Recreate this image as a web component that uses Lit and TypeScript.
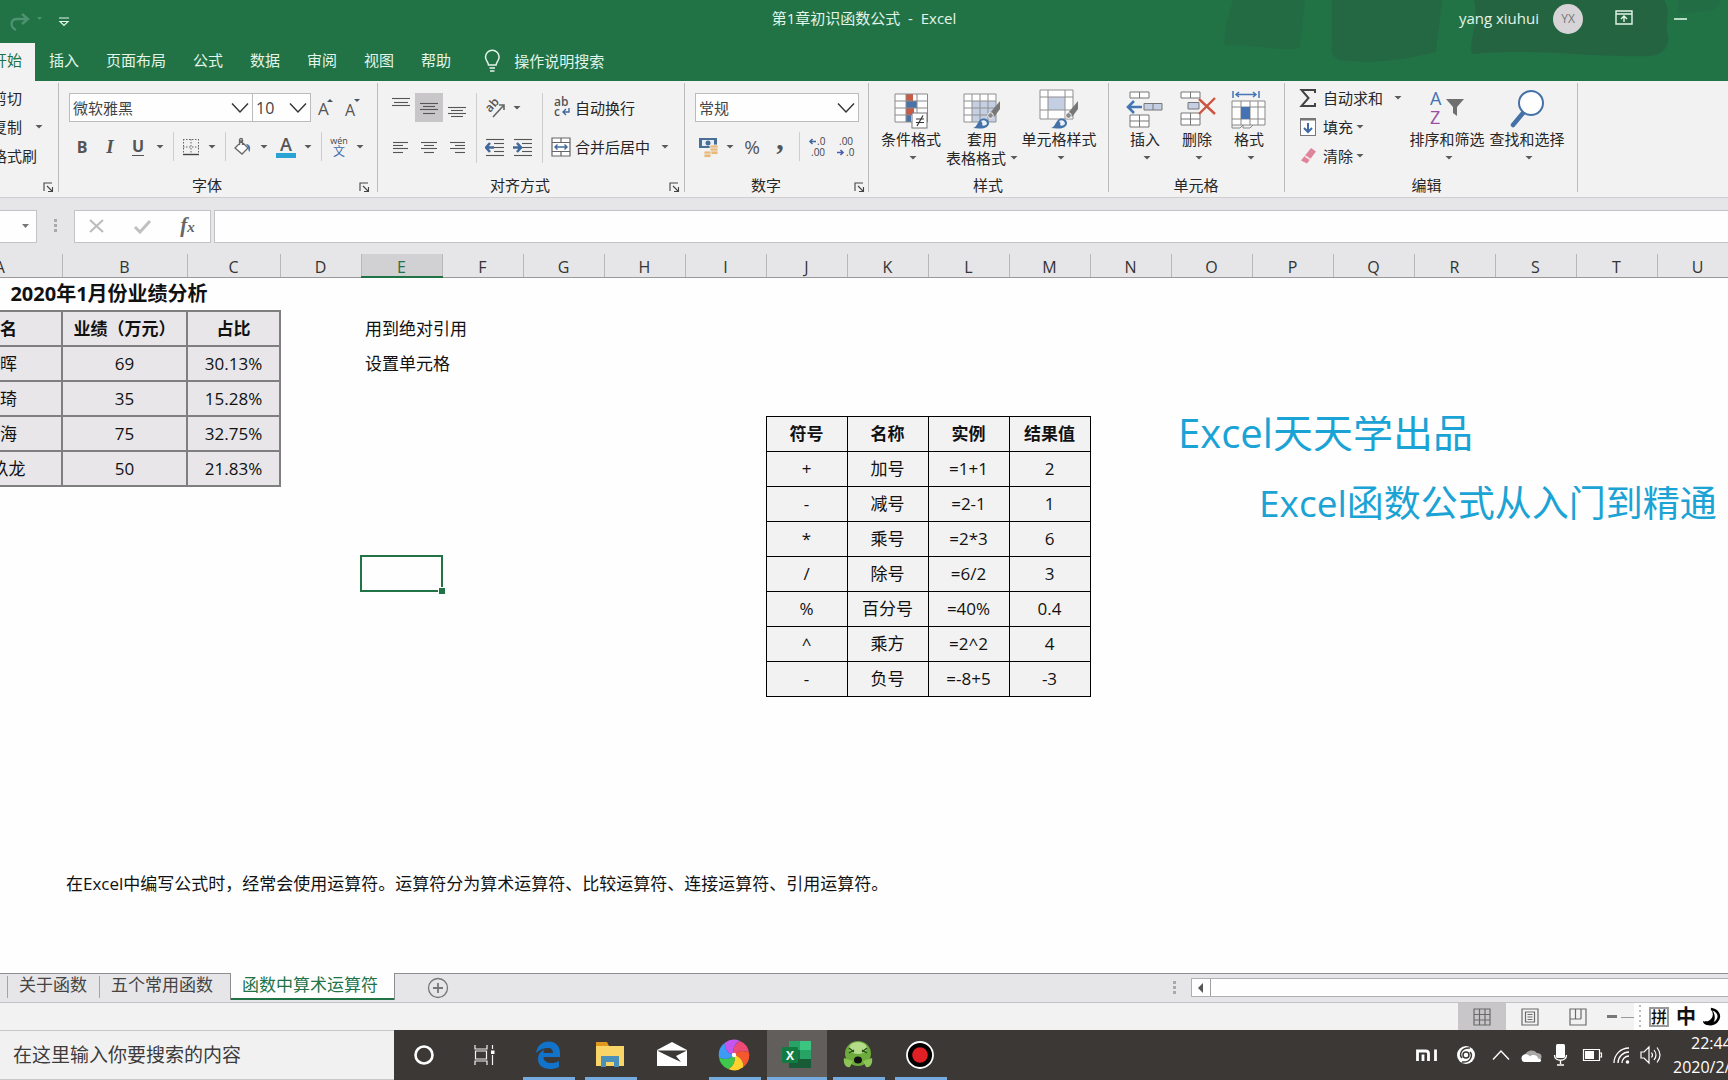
import { LitElement, html, svg, css, nothing } from "lit";
import { customElement, state } from "lit/decorators.js";
import { classMap } from "lit/directives/class-map.js";

type Cell = { t: string; cls?: string; span?: number };

const icon = (w: number, h: number, body: unknown) =>
  html`<svg width=${w} height=${h} viewBox="0 0 ${w} ${h}" aria-hidden="true">${body}</svg>`;

const caretIcon = () => icon(16, 16, svg`<path d="M4.500 6h7L8 9.500z" fill="#5a5a5a"/>`);
const caret = (label: string) => html`<button class="caret" aria-label=${label}>${caretIcon()}</button>`;
const launcher = (label: string) => html`<button class="launcher" aria-label=${label}>
  ${icon(11, 11, svg`<path d="M1 9V1h8M4 4l5 5M9.500 5v4.500H5" fill="none" stroke="#444" stroke-width="1.1"/>`)}
</button>`;

const lines = (rows: [number, number, number][]) =>
  svg`${rows.map(([x, w, y]) => svg`<path d="M${x} ${y}.5h${w}" stroke="#555" stroke-width="1.1"/>`)}`;

const brush = (x: number, y: number) => svg`<g transform="translate(${x} ${y})">
  <path d="M27 0 17 12l4 4 6-8z" fill="#777"/>
  <circle cx="17.500" cy="14.500" r="2.800" fill="#8a8a8a" stroke="#f3f2f3"/>
  <path d="M0 27c4-1 4-5 7-8 3-3 9-1 9 3 0 4-5 6-10 5.500z" fill="#4472a8"/>
  <path d="M8 20c3-2 6 0 6 3-2 2-4 2-5 1 1-1 0-3-1-4z" fill="#eaf0f8"/>
</g>`;

const COLS = [124, 125, 93, ...Array(18).fill(81)];
const LETTERS = "ABCDEFGHIJKLMNOPQRSTU".split("");

const SALES: string[][] = [
  ["姓名", "业绩（万元）", "占比"],
  ["\u3000晖", "69", "30.13%"],
  ["\u3000琦", "35", "15.28%"],
  ["\u3000海", "75", "32.75%"],
  ["\u3000玖龙", "50", "21.83%"],
];

const OPS: string[][] = [
  ["符号", "名称", "实例", "结果值"],
  ["+", "加号", "=1+1", "2"],
  ["-", "减号", "=2-1", "1"],
  ["*", "乘号", "=2*3", "6"],
  ["/", "除号", "=6/2", "3"],
  ["%", "百分号", "=40%", "0.4"],
  ["^", "乘方", "=2^2", "4"],
  ["-", "负号", "=-8+5", "-3"],
];

const ROW_COUNT = 20;

function buildRows(): Cell[][] {
  const rows: Cell[][] = Array.from({ length: ROW_COUNT }, () => COLS.map(() => ({ t: "" })));
  SALES.forEach((r, i) =>
    r.forEach((t, c) => (rows[1 + i][c] = { t, cls: i === 0 ? "sales bold" : "sales" })));
  OPS.forEach((r, i) =>
    r.forEach((t, c) => (rows[4 + i][9 + c] = { t, cls: i === 0 ? "ops bold" : "ops" })));
  rows[1][4] = { t: "用到绝对引用" };
  rows[2][4] = { t: "设置单元格" };
  rows[4][14] = { t: "Excel天天学出品", cls: "brand huge" };
  rows[6][15] = { t: "Excel函数公式从入门到精通", cls: "brand" };
  rows[8][4] = { t: "", cls: "selected" };
  rows[17][1] = { t: "在Excel中编写公式时，经常会使用运算符。运算符分为算术运算符、比较运算符、连接运算符、引用运算符。" };
  rows[0].splice(0, 3, { t: "2020年1月份业绩分析", cls: "heading", span: 3 });
  return rows;
}

@customElement("app-root")
export class AppRoot extends LitElement {
  @state() private sheet = 2;
  private rows = buildRows();
  private sheets = ["关于函数", "五个常用函数", "函数中算术运算符"];

  static styles = css`
    :host {
      display: flex; flex-direction: column; height: 100vh; overflow: hidden;
      font: 15px/20px "Open Sans", "Noto Sans CJK SC", sans-serif; color: #262626; background: #fefefe;
    }
    * { box-sizing: border-box; }
    button, input, select { font: inherit; color: inherit; border: 0; padding: 0; margin: 0; background: none; border-radius: 0; }
    button { display: inline-flex; align-items: center; justify-content: center; white-space: nowrap; flex: none; }
    svg { display: block; flex: none; }
    a { color: inherit; text-decoration: none; }

    .top { background: #217346; color: #e3f5ea; position: relative; flex: none; }
    .smudge { position: absolute; top: 0; right: 0; }
    .titlebar { position: relative; display: grid; grid-template-columns: 1fr auto 1fr; height: 43px; padding-bottom: 8px; align-items: center; }
    .qat { display: flex; align-items: center; padding: 8px 0 0 8px; }
    .title { white-space: pre; }
    .account { display: flex; justify-content: flex-end; align-items: center; padding-right: 34px; }
    .avatar { width: 30px; height: 30px; border-radius: 50%; background: #d6d4d6; color: #777; font-size: 12px; display: grid; place-items: center; margin: 2px 32px 0 14px; }
    .account button + button { margin-left: 35px; }
    .tabs { position: relative; display: flex; gap: 27px; height: 38px; margin-left: -22px; align-items: stretch; white-space: nowrap; }
    .tabs a { display: flex; align-items: center; padding-bottom: 4px; }
    .tabs .home { background: #f3f2f3; color: #217346; padding: 0 13px 4px 14px; margin-right: -13px; }
    .tabs .tell { gap: 8px; padding-bottom: 2px; }

    .ribbon { display: flex; flex: none; height: 117px; background: #f3f2f3; border-bottom: 1px solid #cfcdd0; }
    .group { position: relative; display: grid; grid-template-rows: 92px 20px; padding: 0 9px; margin: 2px 0 3px; height: 109px; border-right: 1px solid #bdbbbe; flex: none; }
    .clip { width: 59px; padding: 0; }
    .font { width: 319px; } .align { width: 307px; } .number { width: 184px; padding-right: 8px; }
    .styles { width: 240px; padding-left: 10px; } .cells { width: 176px; padding-left: 10px; } .edit { width: 293px; padding: 0 6px 0 13px; }
    .group footer { display: flex; justify-content: center; align-items: center; position: relative; padding-right: 22px; line-height: 20px; }
    .group footer.plain { padding-right: 2px; }
    .edit footer.plain { padding-right: 16px; }
    .launcher { position: absolute; right: -5px; bottom: 2px; }
    .font .launcher { right: -2px; }
    .clip .launcher { right: 4px; }
    .two { display: grid; grid-template-rows: 29px 29px; row-gap: 10px; padding-top: 10px; align-content: start; }
    .row { display: flex; align-items: center; }
    .cols { display: flex; align-items: stretch; }
    .cols > .sep { height: 70px; margin-top: 10px; }
    .b28 { width: 28px; height: 29px; }
    .b26 { width: 26px; height: 29px; }
    .on { background: #c8c6c9; }
    .caret { width: 16px; height: 29px; }
    .sep { width: 10px; height: 29px; background: linear-gradient(#cfcdd0, #cfcdd0) center / 1px 100% no-repeat; flex: none; }
    .letter { font-size: 16px; color: #555; }
    .bold { font-weight: 700; }
    .italic { font-family: "Liberation Serif", serif; font-style: italic; font-weight: 700; font-size: 19px; }
    .under { border-bottom: 1px solid #555; line-height: 17px; font-weight: 700; }
    .pct { font-size: 19px; color: #555; }
    .comma { font: 700 30px/20px "Liberation Serif", serif; color: #555; padding-bottom: 16px; }
    .combo { display: grid; height: 29px; }
    .combo select, .combo svg { grid-area: 1 / 1; }
    .combo select { appearance: none; width: 100%; height: 29px; border: 1px solid #bcbabd; background: #fefefe; padding: 0 3px; color: #444; }
    .combo svg { justify-self: end; align-self: center; margin-right: 4px; pointer-events: none; }
    .face { width: 184px; margin-left: 1px; } .size { width: 59px; margin-left: -1px; } .size select { font-size: 16px; }
    .grow { width: 27px; height: 29px; }
    .fmt { width: 164px; margin-left: 1px; }
    .clip .three { display: grid; grid-auto-rows: 29px; justify-items: start; margin-left: -8px; }
    .clip .three .caret { margin-left: 9px; }
    .merge .caret { margin-left: 7px; }
    .big { display: grid; grid-template-rows: 44px 20px 18px; justify-items: center; align-items: center; padding-top: 2px; align-content: start; }
    .big svg { align-self: end; }
    .big .caretrow { display: flex; align-items: center; line-height: 18px; padding-left: 4px; }
    .big .caretrow svg { align-self: center; }
    .big .name { line-height: 20px; align-self: end; }
    .s1 { width: 64px; } .s2 { width: 76px; padding-left: 2px; } .s3 { width: 80px; } .s4 { width: 52px; } .s5 { width: 80px; }
    .edit .three { display: grid; grid-template-rows: 29px 29px 29px; width: 109px; justify-items: start; }
    .edit .three button { gap: 5px; }
    .edit .three .caret { margin-left: 7px; }
    .edit .three button svg + svg { margin-left: -6px; }

    .formula { display: flex; flex: none; align-items: center; height: 56px; background: #e6e5e7; }
    .formula > * { height: 33px; }
    .namebox { display: flex; align-items: center; width: 37px; background: #fefefe; border: 1px solid #c4c2c5; border-left: 0; }
    .namebox input { width: 17px; outline: 0; }
    .grip { width: 37px; display: grid; place-items: center; }
    .fx { display: flex; width: 137px; background: #fefefe; border: 1px solid #c4c2c5; }
    .fx button { width: 45px; }
    .fx i { font: italic 700 21px/24px "Liberation Serif", serif; color: #666; }
    .fx i small { font-size: 15px; }
    .bar { flex: 1; min-width: 0; margin-left: 3px; background: #fefefe; border: 1px solid #c4c2c5; border-right: 0; outline: 0; padding: 0 6px; }

    .sheet { flex: 1 1 0; min-height: 0; overflow: hidden; background: #fefefe; }
    .grid { table-layout: fixed; border-collapse: collapse; width: 1800px; margin-left: -63px; font-size: 17px; line-height: 24px; color: #111; }
    .grid th { height: 23px; padding: 3px 0 0; line-height: 18px; font-weight: 400; font-size: 16px; color: #333; background: #e6e5e7; border-right: 1px solid #b9b7ba; border-bottom: 1px solid #9a989b; }
    .grid th.cur { background: #d1d0d2; color: #217346; border-bottom: 2px solid #217346; }
    .grid tr { height: 35px; }
    .grid tr.short { height: 34px; }
    .grid thead tr { height: 23px; }
    .grid td { padding: 0 0 0 4px; white-space: nowrap; }
    .grid td.heading { text-align: center; font-size: 20px; font-weight: 700; padding: 0; }
    .grid td.sales { background: #e8e6e9; border: 2px solid #7f7f7f; text-align: center; padding: 0; }
    .grid td.ops { background: #f3f2f3; border: 1px solid #000; text-align: center; padding: 0; }
    .grid td.bold { font-weight: 700; }
    .grid td.brand { font-size: 37px; color: #1aa3d4; padding-left: 7px; }
    .grid td.huge { font-size: 40px; }
    .grid td.brand div { height: 35px; line-height: 34px; overflow-x: visible; overflow-y: clip; }
    .grid td.selected { position: relative; }
    .grid td.selected::before { content: ""; position: absolute; inset: -1px; border: 2px solid #217346; }
    .grid td.selected::after { content: ""; position: absolute; right: -3px; bottom: -3px; width: 6px; height: 6px; background: #217346; border: 1px solid #fefefe; border-right: 0; border-bottom: 0; }

    .sheets { display: flex; flex: none; height: 29px; background: #e6e5e7; border-top: 1px solid #8f8d90; font-size: 17px; color: #444; }
    .sheets nav { display: flex; padding-left: 7px; }
    .sheets nav button { height: 22px; margin-top: 2px; padding: 0 12px 4px 11px; border-left: 1px solid #a5a3a6; line-height: 18px; }
    .sheets nav button:nth-child(2) { padding-right: 17px; }
    .sheets nav .act { margin-top: -1px; height: 27px; padding: 0 16px 4px 11px; background: #fefefe; color: #217346; border: solid #8f8d90; border-width: 0 1px; box-shadow: inset 0 -2px #217346; }
    .add { margin-left: 32px; height: 28px; }
    .sheets .grip { margin-left: auto; width: 33px; height: 28px; }
    .scroll { display: flex; width: 537px; height: 19px; margin-top: 4px; background: #fefefe; border: 1px solid #b0aeb1; border-right: 0; }
    .scroll button { width: 19px; border-right: 1px solid #a09ea1; }

    .status { display: flex; flex: none; justify-content: flex-end; height: 28px; background: #f3f2f3; border-top: 1px solid #c4c2c5; }
    .status .view { width: 48px; }
    .zoomer { display: flex; align-items: center; width: 32px; overflow: hidden; }
    .ime { display: flex; align-items: center; width: 94px; height: 28px; background: #fefefe; color: #111; font-weight: 700; }
    .ime .pin { width: 20px; height: 20px; border: 2px solid #999; font-size: 16px; line-height: 16px; display: grid; place-items: center; margin: 0 7px 0 3px; font-weight: 500; }
    .ime .zh { font-size: 20px; margin-right: 6px; }

    .taskbar { display: flex; flex: none; height: 50px; background: #3c3836; color: #fff; }
    .search { width: 394px; background: #f2f1f2; border: solid #c9c7ca; border-width: 1px 0; display: flex; }
    .search input { flex: 1; padding: 0 13px; font-size: 19px; outline: 0; color: #333; }
    .search input::placeholder { color: #3c3c3c; opacity: 1; }
    .task { width: 62px; border: solid transparent; border-width: 0 5px; padding-right: 2px; }
    .task.run { background: linear-gradient(#76abdf, #76abdf) bottom / 100% 3px no-repeat padding-box; }
    .task.front { border-width: 0 1px; background: linear-gradient(#76abdf, #76abdf) bottom / 100% 3px no-repeat padding-box, #625e5c; background-clip: padding-box; }
    .tray { display: flex; margin-left: auto; align-items: center; }
    .clock { width: 55px; overflow: hidden; line-height: 24px; font-size: 16px; white-space: nowrap; }
    .clock .time { padding-left: 18px; display: block; }
  `;

  private chevron = () => icon(18, 12, svg`<path d="M1 1.500 9 10l8-8.500" fill="none" stroke="#333" stroke-width="1.400"/>`);

  private renderTop() {
    const tabs = ["插入", "页面布局", "公式", "数据", "审阅", "视图", "帮助"];
    return html`<header class="top">
      <svg class="smudge" width="520" height="81" viewBox="0 0 520 81" aria-hidden="true">
        <g fill="#275f40" opacity=".75">
          <path d="M25 0h72l-2 20-4 28c-30 4-48-6-74-2-2-18 4-30 8-46z" opacity=".5"/>
          <path d="M124 0h110l-6 52c-34 8-60 12-96 8-8-4-10-8-8-14z" opacity=".7"/>
          <path d="M266 0h190c8 12 0 24 4 36 2 10-6 20-18 20-60 2-110-8-178-2-4-14 8-30 2-54z"/>
          <path d="M470 0h44l-8 10-36 4z" opacity=".4"/>
        </g>
      </svg>
      <div class="titlebar">
        <div class="qat">
          <button aria-label="恢复">${icon(24, 20, svg`<path d="M8 18C2 15 2 7 9 7h9M14 2l6 5-6 5" fill="none" stroke="#4e9270" stroke-width="2.400"/>`)}</button>
          <button aria-label="恢复选项">${icon(16, 20, svg`<path d="M5 5h5L7.500 8z" fill="#4e9270"/>`)}</button>
          <button aria-label="自定义快速访问工具栏">${icon(30, 20, svg`<path d="M11 6h10M12 9.500h8L16 13.500z" fill="none" stroke="#e3f5ea" stroke-width="1.200"/>`)}</button>
        </div>
        <div class="title">第1章初识函数公式  -  Excel</div>
        <div class="account">
          <span>yang xiuhui</span><span class="avatar">YX</span>
          <button aria-label="功能区显示选项">${icon(18, 15, svg`<path d="M1 1h16v13H1zM1 4h16M9 12V6.500M6 9l3-3 3 3" fill="none" stroke="#e3f5ea" stroke-width="1.400"/>`)}</button>
          <button aria-label="最小化">${icon(26, 15, svg`<path d="M6 9h13" stroke="#e3f5ea" stroke-width="1.600"/>`)}</button>
        </div>
      </div>
      <nav class="tabs">
        <a class="home" href="#home">开始</a>
        ${tabs.map((t) => html`<a href="#tab">${t}</a>`)}
        <button class="tell">${icon(28, 24, svg`<path d="M8.500 15c0-3-3-4-3-8a6.800 6.800 0 0 1 13.600 0c0 4-3 5-3 8zM9.500 18h5.500M10 21h4.500" transform="translate(2 1)" fill="none" stroke="#e3f5ea" stroke-width="1.500"/>`)}操作说明搜索</button>
      </nav>
    </header>`;
  }

  private renderFont() {
    return html`<section class="group font">
      <div class="two">
        <div class="row">
          <label class="combo face"><select aria-label="字体"><option>微软雅黑</option></select>${this.chevron()}</label>
          <label class="combo size"><select aria-label="字号"><option>10</option></select>${this.chevron()}</label>
          <button class="grow" aria-label="增大字号">${icon(22, 24, svg`<text x="4" y="19" font-size="17" fill="#555">A</text><path d="M13 6l3-3 3 3z" fill="#456"/>`)}</button>
          <button class="grow" aria-label="减小字号">${icon(22, 24, svg`<text x="4" y="20" font-size="16" fill="#555">A</text><path d="M13 3l3 3 3-3z" fill="#456"/>`)}</button>
        </div>
        <div class="row">
          <button class="b28 letter bold" aria-label="加粗">B</button>
          <button class="b28 letter italic" aria-label="倾斜">I</button>
          <button class="b28 letter" aria-label="下划线"><span class="under">U</span></button>
          ${caret("下划线选项")}<span class="sep"></span>
          <button class="b26" aria-label="边框">${icon(18, 18, svg`<path d="M1 1.500h16M1.500 1v16M16.500 1v16M9 1v16M1 9h16" stroke="#666" stroke-dasharray="1.500 1.500" fill="none"/><path d="M1 16.500h16" stroke="#444" stroke-width="1.400"/>`)}</button>
          ${caret("边框选项")}<span class="sep"></span>
          <button class="b26" aria-label="填充颜色">${icon(20, 20, svg`<path d="M8 4l7 7-6 6-7-6 7-7zM6.500 8V3c0-2 3-2 3 0v5" fill="#fefefe" stroke="#666" stroke-width="1.300"/><path d="M13 7c4 0 5 4 3.500 8-1.500-1-1-4-1.500-5z" fill="#4472a8"/>`)}</button>
          ${caret("填充颜色选项")}
          <button class="b28" aria-label="字体颜色">${icon(22, 24, svg`<text x="5" y="16" font-size="18" font-weight="600" fill="#555">A</text><rect x="1" y="18" width="20" height="5" fill="#28a3d3"/>`)}</button>
          ${caret("字体颜色选项")}<span class="sep"></span>
          <button class="b26" aria-label="拼音指南">${icon(22, 24, svg`<text x="11" y="9" font-size="9" text-anchor="middle" fill="#444">wén</text><text x="11" y="21" font-size="12" text-anchor="middle" fill="#3f6bab">文</text>`)}</button>
          ${caret("拼音选项")}
        </div>
      </div>
      <footer>字体${launcher("字体设置")}</footer>
    </section>`;
  }

  private renderAlign() {
    const L = (label: string, rows: [number, number, number][], cls = "") =>
      html`<button class="b28 ${cls}" aria-label=${label}>${icon(20, 24, lines(rows))}</button>`;
    const dent = (d: string) => svg`${lines([[1, 18, 4], [9, 10, 8], [9, 10, 12], [9, 10, 16], [1, 18, 20]])}<path d=${d} fill="none" stroke="#41689c" stroke-width="2.600"/>`;
    return html`<section class="group align">
      <div class="cols">
        <div class="two">
          <div class="row">
            ${L("顶端对齐", [[1, 18, 2], [3, 14, 6], [1, 18, 9]])}
            ${L("垂直居中", [[1, 18, 7], [4, 12, 10], [1, 18, 13], [4, 12, 17]], "on")}
            ${L("底端对齐", [[1, 18, 11], [4, 12, 14], [1, 18, 17], [4, 12, 20]])}
          </div>
          <div class="row">
            ${L("左对齐", [[2, 15, 7], [2, 10, 10], [2, 15, 13], [2, 10, 17]])}
            ${L("居中", [[2, 16, 7], [5, 10, 10], [2, 16, 13], [5, 10, 17]])}
            ${L("右对齐", [[3, 15, 7], [8, 10, 10], [3, 15, 13], [8, 10, 17]])}
          </div>
        </div>
        <span class="sep"></span>
        <div class="two">
          <div class="row">
            <button class="b28" aria-label="方向">${icon(24, 24, svg`<text x="0" y="0" font-size="12" fill="#555" font-weight="600" transform="translate(7 17) rotate(-48)">ab</text><path d="M10 21 21 9M16 9h5v5" fill="none" stroke="#666" stroke-width="1.600"/>`)}</button>
            ${caret("方向选项")}
          </div>
          <div class="row">
            <button class="b28" aria-label="减少缩进">${icon(20, 24, dent("M9 12.500H1M5 8l-4 4.500L5 17"))}</button>
            <button class="b28" aria-label="增加缩进">${icon(20, 24, dent("M0 12.500h8M4 8l4 4.500L4 17"))}</button>
          </div>
        </div>
        <span class="sep"></span>
        <div class="two">
          <div class="row"><button>${icon(28, 24, svg`<text x="7" y="10" font-size="12" font-weight="600" fill="#555">ab</text><text x="7" y="20" font-size="12" font-weight="600" fill="#555">c</text><path d="M22 12v4h-6M19 13l-3 3 3 3" fill="none" stroke="#41689c" stroke-width="1.400"/>`)}自动换行</button></div>
          <div class="row merge"><button>${icon(28, 24, svg`<path d="M5 3h18v18H5zM5 7.500h18M5 16.500h18M14 3v4.500M14 16.500V21" fill="#fefefe" stroke="#666" stroke-width="1.200"/><path d="M8 12h12M10.500 9.500 8 12l2.500 2.500M17.500 9.500 20 12l-2.500 2.500" fill="none" stroke="#41689c" stroke-width="1.400"/>`)}合并后居中</button>${caret("合并选项")}</div>
        </div>
      </div>
      <footer>对齐方式${launcher("对齐设置")}</footer>
    </section>`;
  }

  private renderNumber() {
    return html`<section class="group number">
      <div class="two">
        <div class="row"><label class="combo fmt"><select aria-label="数字格式"><option>常规</option></select>${this.chevron()}</label></div>
        <div class="row">
          <button class="b28" aria-label="会计数字格式">${icon(22, 22, svg`<rect x="2" y="2" width="18" height="10" fill="#4a6f96"/><path d="M5 4h12v6H5z" fill="#e8eef5"/><circle cx="11" cy="7" r="2.500" fill="#4a6f96"/><g fill="#e8b878" stroke="#f3f2f3" stroke-width=".8"><rect x="13" y="9" width="8" height="3.500" rx="1"/><rect x="13" y="12" width="8" height="3.500" rx="1"/><rect x="13" y="15" width="8" height="3.500" rx="1"/><rect x="7" y="15" width="7" height="3.500" rx="1"/><rect x="7" y="18" width="7" height="3.500" rx="1"/></g>`)}</button>
          ${caret("会计格式选项")}
          <button class="b28 pct" aria-label="百分比样式">%</button>
          <button class="b28 comma" aria-label="千位分隔样式">,</button>
          <span class="sep"></span>
          <button class="b28" aria-label="增加小数位数">${icon(20, 24, svg`<text x="9" y="10" font-size="10" fill="#444">.0</text><text x="3" y="21" font-size="10" fill="#444">.00</text><path d="M8 6.500H2M4.500 4 2 6.500 4.500 9" fill="none" stroke="#41689c" stroke-width="1.600"/>`)}</button>
          <button class="b28" aria-label="减少小数位数">${icon(20, 24, svg`<text x="3" y="10" font-size="10" fill="#444">.00</text><text x="10" y="21" font-size="10" fill="#444">.0</text><path d="M1 17.500h6M4.500 15 7 17.500 4.500 20" fill="none" stroke="#4a5fae" stroke-width="1.600"/>`)}</button>
        </div>
      </div>
      <footer>数字${launcher("数字设置")}</footer>
    </section>`;
  }

  private big(cls: string, pic: unknown, name: string, second = "") {
    return html`<button class="big ${cls}">${pic}<span class="name">${name}</span><span class="caretrow">${second || nothing}${caretIcon()}</span></button>`;
  }

  private renderStyles() {
    return html`<section class="group styles">
      <div class="cols">
        ${this.big("s1", icon(34, 36, svg`<path d="M1 1h33v28H1z" fill="#fefefe"/><path d="M12 1h7v7h-7zM12 15h8v7h-8z" fill="#cb5a45"/><path d="M12 8h11v7H12zM12 22h5v7h-5z" fill="#4a74a8"/><path d="M1 1h32.500v28H1zM1 8h33M1 15h33M1 22h33M12 1v28M23 1v28" fill="none" stroke="#8a8a8a"/><g transform="translate(-1 0)"><rect x="19" y="20" width="15" height="15" fill="#fefefe" stroke="#777"/><path d="M23 26h8M23 29.500h8M30 22.500l-6 10.500" stroke="#333" stroke-width="1.200"/></g>`), "条件格式")}
        ${this.big("s2", icon(38, 36, svg`<path d="M1 1h32v28H1z" fill="#fefefe"/><path d="M9 8h24v21H9z" fill="#c5cfe4"/><path d="M1 1h32v28H1zM1 8h32M1 15h32M1 22h32M9 1v28M17 1v28M25 1v28" fill="none" stroke="#8f8f8f"/>${brush(10, 8)}`), "套用", "表格格式")}
        ${this.big("s3", icon(40, 40, svg`<path d="M1 1h33v29H1z" fill="#fefefe"/><path d="M9 8h17v13H9z" fill="#c5cfe4"/><path d="M1 1h33v29H1zM1 8h33M1 21h33M9 1v29M26 1v29" fill="none" stroke="#8f8f8f"/>${brush(12, 12)}`), "单元格样式")}
      </div>
      <footer class="plain">样式</footer>
    </section>`;
  }

  private renderCells() {
    return html`<section class="group cells">
      <div class="cols">
        ${this.big("s4", icon(38, 38, svg`<g fill="#fefefe" stroke="#777"><path d="M4 1h19v6H4zM13.500 1v6M4 24h19v12H4zM4 30h19M13.500 24v12"/><path d="M18 12.500h18v6.500H18zM27 12.500v6.500" fill="#c5cfe4"/></g><path d="M16 16H2M8 10l-6 6 6 6" fill="none" stroke="#4577b4" stroke-width="2.600"/>`), "插入")}
        ${this.big("s4", icon(38, 38, svg`<g fill="#fefefe" stroke="#777"><path d="M3 1h19v6H3zM12.500 1v6M3 22h19v12H3zM3 28h19M12.500 22v12"/><path d="M10 11.500h11V18H10z" fill="#c5cfe4"/></g><path d="M21 8l16 15M37 7 21 23" fill="none" stroke="#cb5540" stroke-width="2.400"/>`), "删除")}
        ${this.big("s4", icon(36, 38, svg`<path d="M1 10h33v24H1z" fill="#fefefe"/><path d="M1 10h33v24H1zM1 16h33M1 28h33M10 10v24M19 10v24M27 10v24M1 34v3h8l3-3v3h7l3-3" fill="none" stroke="#888"/><path d="M10 16h9v12h-9z" fill="#4472b4"/><path d="M2 0v7M28 0v7M5 3.500h20M8 1 5 3.500 8 6M22 1l3 2.500L22 6" fill="none" stroke="#4577b4" stroke-width="1.500"/>`), "格式")}
      </div>
      <footer class="plain">单元格</footer>
    </section>`;
  }

  private renderEdit() {
    return html`<section class="group edit">
      <div class="cols">
        <div class="three">
          <div class="row"><button>${icon(20, 20, svg`<path d="M17 5V2H3.500l7 8-7 8H17v-3" fill="none" stroke="#444" stroke-width="2"/>`)}自动求和</button>${caret("自动求和选项")}</div>
          <button>${icon(20, 20, svg`<rect x="2.500" y="1.500" width="15" height="17" fill="#fefefe" stroke="#777"/><path d="M2 2.500h16" stroke="#777" stroke-width="2"/><path d="M10 6v9M6 11l4 4 4-4" fill="none" stroke="#3f6ba5" stroke-width="2"/>`)}填充${caretIcon()}</button>
          <button>${icon(20, 20, svg`<path d="M13 2l5 3.500-9 12-6-3z" fill="#e0849c"/><path d="M7 10l5.500 3.500" stroke="#f7e4ea" stroke-width="1.500"/>`)}清除${caretIcon()}</button>
        </div>
        ${this.big("s5", icon(38, 40, svg`<text x="2" y="16" font-size="18" fill="#4472b4">A</text><text x="2" y="35" font-size="18" fill="#9a4fa5">Z</text><path d="M18 10h18l-7 8v9l-4-3v-6z" fill="#6f6f6f"/>`), "排序和筛选")}
        ${this.big("s5", icon(38, 40, svg`<path d="M15 24 5 36" stroke="#4472a8" stroke-width="4.500" stroke-linecap="round"/><circle cx="23" cy="14" r="12" fill="#fefefe" stroke="#4472a8" stroke-width="2"/>`), "查找和选择")}
      </div>
      <footer class="plain">编辑</footer>
    </section>`;
  }

  private renderFormula() {
    const dots = icon(5, 16, svg`<g fill="#aaa"><rect x="1" y="1" width="3" height="3"/><rect x="1" y="6" width="3" height="3"/><rect x="1" y="11" width="3" height="3"/></g>`);
    return html`<div class="formula">
      <div class="namebox"><input aria-label="名称框" />${icon(18, 16, svg`<path d="M5 6h7l-3.500 4z" fill="#777"/>`)}</div>
      <span class="grip">${dots}</span>
      <div class="fx">
        <button aria-label="取消">${icon(20, 16, svg`<path d="M2 2l13 12M15 2 2 14" stroke="#bbb" stroke-width="2"/>`)}</button>
        <button aria-label="输入">${icon(22, 16, svg`<path d="M3 9l5 5L18 3" fill="none" stroke="#c0c0c0" stroke-width="3"/>`)}</button>
        <button aria-label="插入函数"><i>f<small>x</small></i></button>
      </div>
      <input class="bar" aria-label="编辑栏" />
    </div>`;
  }

  private renderSheet() {
    return html`<main class="sheet"><table class="grid">
      <colgroup>${COLS.map((w) => html`<col width=${w} />`)}</colgroup>
      <thead><tr>${LETTERS.map((l) => html`<th scope="col" class=${classMap({ cur: l === "E" })}>${l}</th>`)}</tr></thead>
      <tbody>${this.rows.map((r, i) => html`<tr class=${classMap({ short: i === 0 || (i > 11 && i < 17) })}>
        ${r.map((c) => html`<td class=${c.cls ?? ""} colspan=${c.span ?? 1}>${c.cls?.startsWith("brand") ? html`<div>${c.t}</div>` : c.t}</td>`)}
      </tr>`)}</tbody>
    </table></main>`;
  }

  private renderFooter() {
    const v = (label: string, body: unknown, on = false) =>
      html`<button class="view ${on ? "on" : ""}" aria-label=${label}>${icon(18, 18, svg`<g fill="none" stroke="#6a6a6a" stroke-width="1.200">${body}</g>`)}</button>`;
    return html`<div class="sheets">
        <nav>${this.sheets.map((s, i) => html`<button class=${classMap({ act: i === this.sheet })} @click=${() => (this.sheet = i)}>${s}</button>`)}</nav>
        <button class="add" aria-label="新工作表">${icon(22, 22, svg`<circle cx="11" cy="11" r="9.500" fill="none" stroke="#777" stroke-width="1.300"/><path d="M6 11h10M11 6v10" stroke="#777" stroke-width="1.800"/>`)}</button>
        <span class="grip">${icon(5, 16, svg`<g fill="#aaa"><rect x="1" y="1" width="3" height="3"/><rect x="1" y="6" width="3" height="3"/><rect x="1" y="11" width="3" height="3"/></g>`)}</span>
        <div class="scroll"><button aria-label="向左滚动">${icon(8, 10, svg`<path d="M6 0v10L1 5z" fill="#555"/>`)}</button></div>
      </div>
      <div class="status">
        ${v("普通", svg`<path d="M1 1h16v16H1zM1 6.500h16M1 12h16M6.500 1v16M12 1v16"/>`, true)}
        ${v("页面布局", svg`<path d="M1 1h16v16H1zM4.500 4h9v10h-9zM6.500 6.500h5M6.500 9h5M6.500 11.500h5"/>`)}
        ${v("分页预览", svg`<path d="M1 1h16v16H1zM6.500 1v10M12 1v10M1 11h11"/>`)}
        <div class="zoomer">${icon(32, 20, svg`<path d="M5 9.500h10" stroke="#777" stroke-width="3"/><path d="M19 10.500h13" stroke="#999"/>`)}</div>
        <div class="ime">${icon(12, 28, svg`<path d="M6 2v24" stroke="#bbb" stroke-width="2" stroke-dasharray="2 3"/>`)}<span class="pin">拼</span><span class="zh">中</span>${icon(20, 22, svg`<path d="M9 3c7 1 10 7 6 12-3 4-9 4-12 1" fill="none" stroke="#000" stroke-width="2.600"/><path d="M8 2c3 3 4 8 1 11s-6 3-8 2c0 4 6 5 9 3 4-3 4-12-2-16z" fill="#000"/>`)}</div>
      </div>`;
  }

  private renderTaskbar() {
    const task = (label: string, cls: string, body: unknown) =>
      html`<button class="task ${cls}" aria-label=${label}>${icon(32, 32, body)}</button>`;
    const hues = ["#ee4a76", "#f5582f", "#ffd02e", "#3fc94c", "#3e9bf5", "#c455ee"];
    return html`<footer class="taskbar">
      <label class="search"><input aria-label="搜索" placeholder="在这里输入你要搜索的内容" /></label>
      ${task("Cortana", "", svg`<circle cx="16" cy="16" r="8.500" fill="none" stroke="#fff" stroke-width="2.600"/>`)}
      ${task("任务视图", "", svg`<path d="M5 6v4h12V6M5 26v-4h12v4M5.500 12h11v8h-11zM22.500 6v4M22.500 16v10" fill="none" stroke="#f2f2f2" stroke-width="1.200"/><rect x="21" y="11.500" width="3.500" height="3.500" fill="#fff"/>`)}
      ${task("Edge", "run", svg`<path d="M4 14C5.500 6.500 10 2.500 16.500 2.500c7 0 11.500 4.500 11.500 11.500V18H11.500c0 4 3.500 6 8 6 3 0 5-.5 7.500-2v6c-3 1.500-6 2-9 2-7 0-12-3.500-12-10 0-4.500 2.500-7.500 6.500-9.500-.8 1.200-1 2-1 3.500h9.500c0-3-1.500-5-4.500-5-5 0-9 1.500-12.500 5z" fill="#1173c9"/>`)}
      ${task("文件资源管理器", "run", svg`<path d="M2 3h11l2 4H2z" fill="#e0981d"/><path d="M2 7h28v20H2z" fill="#f9d467"/><path d="M7 17h18v11h-5v-5h-8v5H7z" fill="#4a90b8"/>`)}
      ${task("邮件", "", svg`<path d="M1 11 16 3l15 8v16H1z" fill="#fff"/><path d="M1 11.500h30L20 17l5 6L14 18z" fill="#3c3836"/>`)}
      ${task("浏览器", "run", svg`${hues.map((c, i) => svg`<path d="M16 16C14 10 17 4 22 2A15 15 0 0 1 31.100 14.200C26.900 10.900 20.200 11.300 16 16z" transform="rotate(${i * 60} 16 16)" fill=${c}/>`)}<circle cx="16" cy="16" r="2.200" fill="#fff"/>`)}
      ${task("Excel", "front", svg`<path d="M9 2h22v27H9z" fill="#1d7044"/><path d="M9 2h11v9H9z" fill="#27a366"/><path d="M20 2h11v9H20z" fill="#3cc481"/><path d="M20 11h11v9H20z" fill="#27a366"/><path d="M9 20h22v9H9z" fill="#185c37"/><rect x="2" y="8" width="16" height="16" rx="1" fill="#107c41"/><text x="10" y="20.500" font-size="12" font-weight="700" text-anchor="middle" fill="#fff">X</text>`)}
      ${task("青蛙", "run", svg`<ellipse cx="16" cy="14.500" rx="13" ry="12.500" fill="#6cab3c"/><ellipse cx="16" cy="9" rx="9" ry="6" fill="#b4dc8a"/><path d="M2 19c-1 6 2 10 6 9l3-6M30 19c1 6-2 10-6 9l-3-6" fill="#8cc455"/><path d="M7 9l5 4M7 14l5-3M25 9l-5 4M25 14l-5-3" stroke="#27501a" stroke-width="1.400"/><ellipse cx="16" cy="21" rx="4" ry="3.500" fill="#111"/>`)}
      ${task("录制", "run", svg`<circle cx="16" cy="16" r="13" fill="#000" stroke="#fff" stroke-width="1.800"/><circle cx="16" cy="16" r="7.800" fill="#e02024"/>`)}
      <div class="tray">
        ${icon(40, 24, svg`<path d="M7.500 18V8H15.500q3 0 3 2.500V18M13 11.500V18M25.500 6.500V18" fill="none" stroke="#fff" stroke-width="2.800"/>`)}
        ${icon(32, 24, svg`<circle cx="16" cy="12" r="9" fill="#fff"/><path d="M20 5C11 4 9 12 12 15M12 19c9 1 11-7 8-10" fill="none" stroke="#3c3836" stroke-width="1.500"/><circle cx="16" cy="12" r="3" fill="#fff" stroke="#3c3836" stroke-width="1.500"/>`)}
        ${icon(34, 24, svg`<path d="M11 16.500 19 8l8 8.500" fill="none" stroke="#fff" stroke-width="1.400"/>`)}
        ${icon(30, 24, svg`<path d="M9 13c0-5 8-8 12-3 5 0 5 4 4 6H12z" fill="#a9a7a6"/><path d="M8 19a4 4 0 0 1 0-7.500c3-1 5 .5 6 2 3-3 8-1 8 2 4 0 4 3.500 1 3.500z" fill="#fff"/>`)}
        ${icon(30, 24, svg`<rect x="10" y="1" width="9" height="14" rx="1.500" fill="#fff"/><path d="M8.500 12c0 7 12 7 12 0M14.500 17v4M11 22h7" fill="none" stroke="#fff" stroke-width="1.400"/>`)}
        ${icon(31, 24, svg`<path d="M7.500 6.500h16v11h-16zM24 10h1.500v4H24" fill="none" stroke="#fff" stroke-width="1.200"/><rect x="9" y="8" width="9" height="8" fill="#fff"/>`)}
        ${icon(28, 24, svg`<path d="M7 20A15 15 0 0 1 22 5M11 20A11 11 0 0 1 22 9M15 20a7 7 0 0 1 7-7" fill="none" stroke="#fff" stroke-width="1.300"/><circle cx="20.500" cy="19" r="1.800" fill="#fff"/>`)}
        ${icon(38, 24, svg`<path d="M6 9h3l5-5v16l-5-5H6zM16.500 9.500q2 2.500 0 5M19 7q4 5 0 10M22 4.500q6 7.500 0 15" fill="none" stroke="#fff" stroke-width="1.200"/>`)}
        <div class="clock"><span class="time">22:44</span><span>2020/2/</span></div>
      </div>
    </footer>`;
  }

  render() {
    return html`
      ${this.renderTop()}
      <div class="ribbon">
        <section class="group clip">
          <div class="three"><button>剪切</button><span class="row"><button>复制</button>${caret("复制选项")}</span><button>格式刷</button></div>
          <footer>${launcher("剪贴板")}</footer>
        </section>
        ${this.renderFont()}${this.renderAlign()}${this.renderNumber()}${this.renderStyles()}${this.renderCells()}${this.renderEdit()}
      </div>
      ${this.renderFormula()}${this.renderSheet()}${this.renderFooter()}${this.renderTaskbar()}
    `;
  }
}
